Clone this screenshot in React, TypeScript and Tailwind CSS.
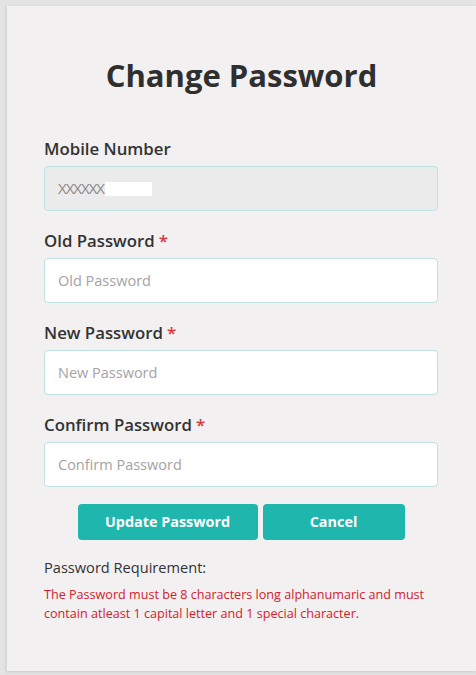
import React from 'react';

const font = { fontFamily: '"Open Sans", "Noto Sans", sans-serif' };

function Field({ label, required, placeholder, value, disabled }: { label: string; required?: boolean; placeholder?: string; value?: React.ReactNode; disabled?: boolean }) {
  return (
    <div className="flex flex-col">
      <label className="text-[16.8px] font-semibold text-[#333] leading-[22px] h-[22px]">
        {label}
        {required && <span className="text-[#d9363e] ml-1">*</span>}
      </label>
      <div
        className={`mt-[6px] h-[45px] rounded-[4px] border border-[#bfe1e2] flex items-center px-[13px] text-[14.5px] ${disabled ? 'bg-[#ecebeb] text-[#8a8a8a]' : 'bg-white text-[#a3a3a3]'}`}
      >
        {value ?? placeholder}
      </div>
    </div>
  );
}

export default function App() {
  return (
    <div className="min-h-[675px] w-[476px] bg-[#e4e4e4] pt-[6px] pl-[6px] overflow-hidden" style={font}>
      <div className="h-[665px] bg-[#f2f0f0] border-l border-[#d8d8d8] shadow-[0_1px_3px_rgba(0,0,0,0.12)]">
        <div className="w-[394px] ml-[37px] pt-[47px]">
          <h1 className="text-center text-[31px] font-bold text-[#2f2f2f] leading-[44px] pl-[1px]">Change Password</h1>
          <div className="mt-[41px] flex flex-col gap-[19px]">
            <Field
              label="Mobile Number"
              disabled
              value={
                <span className="flex items-center">
                  <span className="text-[15px] tracking-[-1px]">XXXXXX</span>
                  <span className="inline-block w-[47px] h-[14px] bg-white ml-[1px]"></span>
                </span>
              }
            />
            <Field label="Old Password" required placeholder="Old Password" />
            <Field label="New Password" required placeholder="New Password" />
            <Field label="Confirm Password" required placeholder="Confirm Password" />
          </div>
          <div className="mt-[17px] flex justify-center gap-[5px]">
            <button className="w-[180px] h-[36px] rounded-[4px] bg-[#1eb6ad] text-white font-bold text-[14.4px]">Update Password</button>
            <button className="w-[142px] h-[36px] rounded-[4px] bg-[#1eb6ad] text-white font-bold text-[14.4px]">Cancel</button>
          </div>
          <p className="mt-[17px] text-[14.6px] text-[#333] leading-[20px]">Password Requirement:</p>
          <p className="mt-[8px] text-[12.6px] text-[#d4202c] leading-[19px]">
            The Password must be 8 characters long alphanumaric and must contain atleast 1 capital letter and 1 special character.
          </p>
        </div>
      </div>
    </div>
  );
}
